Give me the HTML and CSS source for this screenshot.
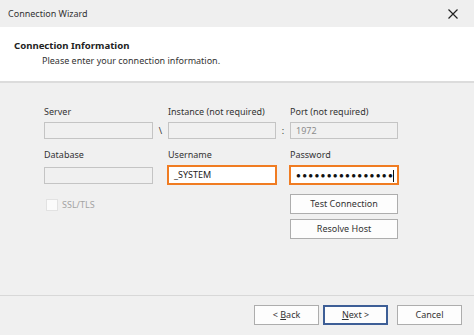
FILE: index.html
```html
<html>
<head>
	<title>Connection Wizard</title>
	<link rel="stylesheet" href="styles.css">
</head>
<body>
<div class="window">
	<div class="titlebar">
		<span class="title">Connection Wizard</span>
		<svg class="close" width="10" height="10" viewBox="0 0 10 10"><path d="M0.5 0.5L9.5 9.5M9.5 0.5L0.5 9.5" stroke="#222" stroke-width="1.2"/></svg>
	</div>
	<div class="header">
		<div class="heading">Connection Information</div>
		<div class="subheading">Please enter your connection information.</div>
	</div>
	<div class="main">
		<div class="form">
			<div class="label">Server</div>
			<div></div>
			<div class="label">Instance (not required)</div>
			<div></div>
			<div class="label">Port (not required)</div>

			<div class="field disabled"></div>
			<div class="sep">\</div>
			<div class="field disabled"></div>
			<div class="sep">:</div>
			<div class="field disabled muted">1972</div>

			<div class="label spaced">Database</div>
			<div></div>
			<div class="label spaced">Username</div>
			<div></div>
			<div class="label spaced">Password</div>

			<div class="field disabled"></div>
			<div></div>
			<div class="field focus">_SYSTEM</div>
			<div></div>
			<div class="field focus dots">&#9679;&#9679;&#9679;&#9679;&#9679;&#9679;&#9679;&#9679;&#9679;&#9679;&#9679;&#9679;&#9679;&#9679;&#9679;&#9679;<span class="caret"></span></div>

			<div class="check"><span class="box"></span>SSL/TLS</div>
			<div></div>
			<div></div>
			<div></div>
			<div class="actions">
				<div class="button">Test Connection</div>
				<div class="button">Resolve Host</div>
			</div>
		</div>
	</div>
	<div class="footer">
		<div class="button small">&lt; <u>B</u>ack</div>
		<div class="button small default"><u>N</u>ext &gt;</div>
		<div class="button small cancel">Cancel</div>
	</div>
</div>
</body>
</html>
```
FILE: styles.css
```css
body {
	margin: 0;
	font-family: "Noto Sans", "Liberation Sans", sans-serif;
	font-size: 9px;
	color: #222;
}
.window {
	width: 474px;
	height: 335px;
	display: flex;
	flex-direction: column;
	background: #f0f0f0;
}
.titlebar {
	height: 27px;
	display: flex;
	align-items: center;
	justify-content: space-between;
	padding: 0 16px 0 8px;
	background: #efefef;
	font-size: 9px;
	color: #333;
}
.header {
	background: #fff;
	border-bottom: 2px solid #dcdcdc;
	padding-top: 12px;
	box-sizing: border-box;
	height: 56px;
}
.heading {
	font-weight: bold;
	font-size: 9.6px;
	margin-left: 14px;
	color: #222;
}
.subheading {
	margin-left: 42px;
	margin-top: 2px;
	color: #333;
}
.main {
	flex: 1;
	padding: 21px 0 0 44px;
}
.form {
	display: grid;
	grid-template-columns: 109px 15px 108px 14px 108px;
	align-items: center;
}
.label {
	height: 16px;
	line-height: 16px;
	margin-bottom: 2px;
	color: #333;
}
.label.spaced {
	margin-top: 8px;
}
.sep {
	text-align: center;
	color: #333;
}
.field {
	height: 17px;
	box-sizing: border-box;
	border: 1px solid #bcbcbc;
	background: #fff;
	padding-left: 5px;
	line-height: 15px;
	white-space: nowrap;
	overflow: hidden;
}
.field.disabled {
	background: #f0f0f0;
	border-color: #c4c4c4;
}
.muted {
	color: #8c8c8c;
}
.field.focus {
	border: 2px solid #f07c22;
	height: 20px;
	margin: 0 -1px;
	line-height: 16px;
	padding-left: 5px;
}
.dots {
	font-size: 8px;
	letter-spacing: 1.3px;
	color: #111;
}
.caret {
	display: inline-block;
	width: 1px;
	height: 12px;
	background: #111;
	vertical-align: middle;
	margin-left: -1px;
}
.check {
	display: flex;
	align-items: center;
	gap: 4px;
	color: #a3a3a3;
	align-self: start;
	margin-top: 13px;
	margin-left: 2px;
}
.box {
	width: 12px;
	height: 12px;
	background: #fbfbfb;
	border: 1px solid #e2e2e2;
	box-sizing: border-box;
}
.actions {
	display: flex;
	flex-direction: column;
	gap: 5px;
	margin-top: 9px;
}
.button {
	height: 20px;
	box-sizing: border-box;
	border: 1px solid #adadad;
	background: #fdfdfd;
	text-align: center;
	line-height: 18px;
	color: #333;
}
.footer {
	height: 40px;
	box-sizing: border-box;
	border-top: 1px solid #d8d8d8;
	display: flex;
	padding: 9px 0 0 254px;
	gap: 4px;
}
.button.small {
	width: 65px;
}
.button.default {
	border: 2px solid #3d5e96;
	line-height: 16px;
}
.button.cancel {
	margin-left: 5px;
}
u {
	text-decoration: underline;
	text-underline-offset: 1px;
}
```
